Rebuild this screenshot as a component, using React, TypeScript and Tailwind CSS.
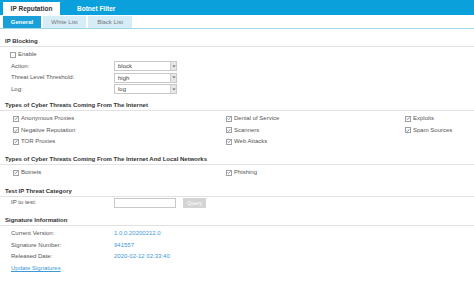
import { ReactNode } from "react";

const font = { fontFamily: '"Liberation Sans", Arial, sans-serif' };

const Check = ({ on }: { on?: boolean }) => (
  <span className="inline-flex w-[6px] h-[6px] border border-[#a0a0a0] bg-white items-center justify-center shrink-0">
    {on && (
      <svg viewBox="0 0 6 6" className="w-[5px] h-[5px]">
        <path d="M0.8 3.1 L2.4 4.6 L5.2 1.2" fill="none" stroke="#4a7ba6" strokeWidth="1.1" />
      </svg>
    )}
  </span>
);

const Select = ({ value }: { value: string }) => (
  <div className="w-[63px] h-[10px] border border-[#c8c8c8] bg-white flex items-center">
    <span className="flex-1 pl-[3px] text-[6px] text-[#444] leading-none">{value}</span>
    <span className="w-[6px] h-full bg-[#e6e6e6] border-l border-[#d0d0d0] flex items-center justify-center">
      <svg viewBox="0 0 6 4" className="w-[4px] h-[3px]">
        <path d="M0.5 0.5 L3 3.2 L5.5 0.5 Z" fill="#666" />
      </svg>
    </span>
  </div>
);

const Header = ({ title, mt }: { title: string; mt: string }) => (
  <div className={`${mt} h-[10px] border-b border-[#e2e2e2] flex items-end pb-[1px] pl-[5px] text-[6px] font-bold text-[#333] leading-[7px]`}>
    {title}
  </div>
);

const Row = ({ label, children }: { label: string; children?: ReactNode }) => (
  <div className="h-[11.5px] flex items-center pl-[11px] text-[6px] text-[#555]">
    <span className="w-[103px]">{label}</span>
    {children}
  </div>
);

const Item = ({ label, x }: { label: string; x: string }) => (
  <div className={`${x} flex items-center gap-[2px] text-[6px] text-[#555]`}>
    <Check on />
    <span>{label}</span>
  </div>
);

const CheckRow = ({ items }: { items: string[] }) => (
  <div className="h-[11.5px] flex items-center pl-[13px]">
    <Item label={items[0]} x="w-[213px]" />
    {items[1] && <Item label={items[1]} x="w-[179px]" />}
    {items[2] && <Item label={items[2]} x="" />}
  </div>
);

export default function App() {
  return (
    <div className="w-[474px] h-[289px] bg-white overflow-hidden" style={font}>
      <div className="h-[15px] bg-[#0aa0dc] flex items-end pl-[3px]">
        <div className="h-[13px] w-[57px] bg-white flex items-center justify-center text-[6.5px] font-bold text-[#333]">IP Reputation</div>
        <div className="h-[13px] ml-[17px] flex items-center text-[6.5px] font-bold text-white">Botnet Filter</div>
      </div>
      <div className="h-[14px] border-b border-[#9fd5ea] flex items-end pl-[3px] gap-[2px]">
        <div className="h-[12px] w-[38px] bg-[#1a9fd9] flex items-center justify-center text-[6px] font-bold text-white">General</div>
        <div className="h-[12px] w-[43px] bg-[#d6ecf7] flex items-center justify-center text-[6px] text-[#777]">White List</div>
        <div className="h-[12px] w-[44px] bg-[#d6ecf7] flex items-center justify-center text-[6px] text-[#777]">Black List</div>
      </div>

      <Header title="IP Blocking" mt="mt-[8px]" />
      <div className="pt-[2px]">
        <div className="h-[11.5px] flex items-center pl-[10px] gap-[2px] text-[6px] text-[#555]">
          <Check />
          <span>Enable</span>
        </div>
        <Row label="Action:"><Select value="block" /></Row>
        <Row label="Threat Level Threshold:"><Select value="high" /></Row>
        <Row label="Log:"><Select value="log" /></Row>
      </div>

      <Header title="Types of Cyber Threats Coming From The Internet" mt="mt-[6px]" />
      <div className="pt-[2px]">
        <CheckRow items={["Anonymous Proxies", "Denial of Service", "Exploits"]} />
        <CheckRow items={["Negative Reputation", "Scanners", "Spam Sources"]} />
        <CheckRow items={["TOR Proxies", "Web Attacks"]} />
      </div>

      <Header title="Types of Cyber Threats Coming From The Internet And Local Networks" mt="mt-[7.5px]" />
      <div className="pt-[2px]">
        <CheckRow items={["Botnets", "Phishing"]} />
      </div>

      <Header title="Test IP Threat Category" mt="mt-[8.5px]" />
      <div className="h-[11.5px] flex items-center pl-[11px] text-[6px] text-[#555]">
        <span className="w-[103px]">IP to test:</span>
        <div className="w-[62px] h-[10px] border border-[#c8c8c8] bg-white" />
        <div className="ml-[7px] w-[23px] h-[10px] bg-[#d4d4d4] flex items-center justify-center text-white text-[5.5px]">Query</div>
      </div>

      <Header title="Signature Information" mt="mt-[7.5px]" />
      <div className="pt-[2px]">
        <Row label="Current Version:"><span className="text-[#3d9ad6]">1.0.0.20200212.0</span></Row>
        <Row label="Signature Number:"><span className="text-[#3d9ad6]">941557</span></Row>
        <Row label="Released Date:"><span className="text-[#3d9ad6]">2020-02-12 02:33:40</span></Row>
        <div className="h-[11.5px] flex items-center pl-[11px] text-[6px] text-[#3d9ad6] underline">Update Signatures</div>
      </div>
    </div>
  );
}
